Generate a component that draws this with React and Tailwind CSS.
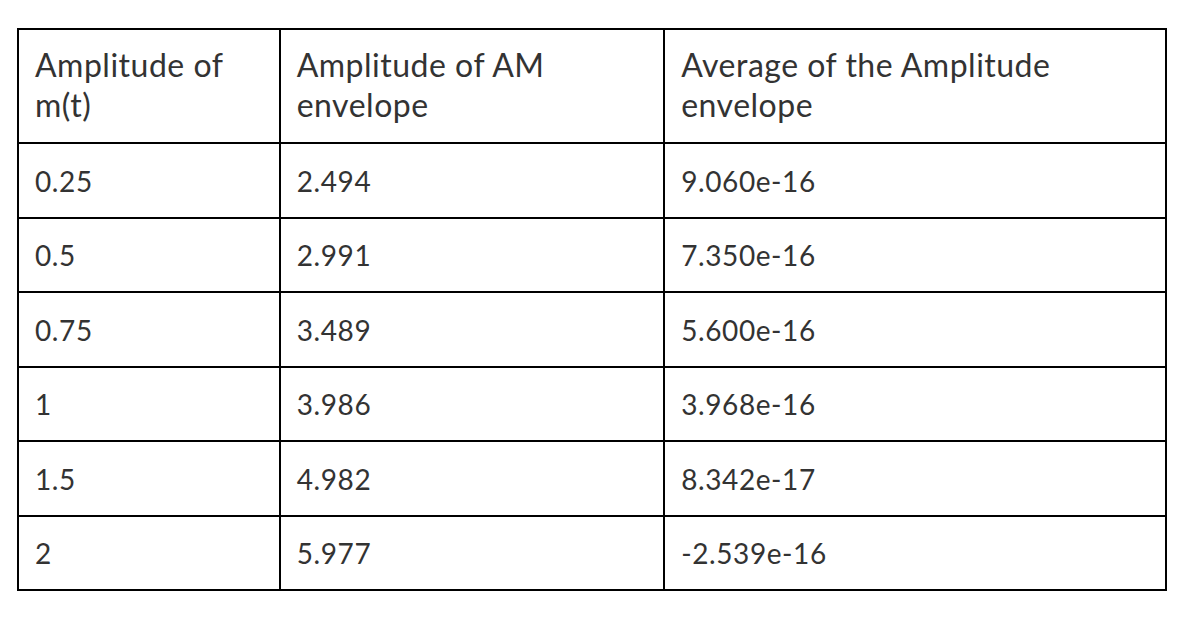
import React from 'react';

const rows = [
  ['0.25', '2.494', '9.060e-16'],
  ['0.5', '2.991', '7.350e-16'],
  ['0.75', '3.489', '5.600e-16'],
  ['1', '3.986', '3.968e-16'],
  ['1.5', '4.982', '8.342e-17'],
  ['2', '5.977', '-2.539e-16'],
];

export default function App() {
  return (
    <div className="min-h-screen bg-white pt-[28px] pl-[17px]" style={{ fontFamily: 'Lato, "Noto Sans", sans-serif' }}>
      <table className="border-collapse w-[1150px] text-[#333333]">
        <colgroup>
          <col className="w-[262px]" />
          <col className="w-[385px]" />
          <col className="w-[503px]" />
        </colgroup>
        <thead>
          <tr>
            {['Amplitude of m(t)', 'Amplitude of AM envelope', 'Average of the Amplitude envelope'].map((h, i) => (
              <th
                key={i}
                className={`border-2 border-black h-[114px] px-[16px] pb-[3px] text-left align-middle font-normal text-[32px] tracking-[0.5px] leading-[40px] ${i === 0 ? 'pr-[30px]' : i === 1 ? 'pr-[100px]' : 'pr-[80px]'}`}
              >
                {h}
              </th>
            ))}
          </tr>
        </thead>
        <tbody>
          {rows.map((r, ri) => (
            <tr key={ri}>
              {r.map((c, ci) => (
                <td
                  key={ci}
                  className={`border-2 border-black px-[16px] text-[28px] tracking-[0.6px] align-middle ${ri % 2 === 0 ? 'h-[75px]' : 'h-[74px]'}`}
                >
                  {c}
                </td>
              ))}
            </tr>
          ))}
        </tbody>
      </table>
    </div>
  );
}
